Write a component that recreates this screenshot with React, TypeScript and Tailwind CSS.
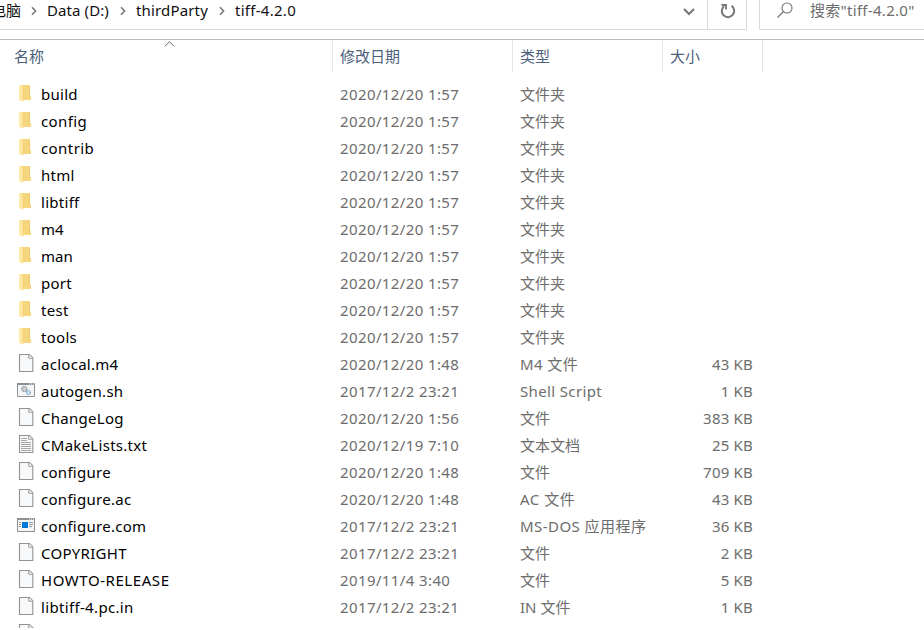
import React from "react";

type Kind = "folder" | "file" | "text" | "script" | "app";
type Row = { name: string; date: string; type: string; size?: string; kind: Kind };

const folders = ["build", "config", "contrib", "html", "libtiff", "m4", "man", "port", "test", "tools"];

const rows: Row[] = [
  ...folders.map((name): Row => ({ name, date: "2020/12/20 1:57", type: "文件夹", kind: "folder" })),
  { name: "aclocal.m4", date: "2020/12/20 1:48", type: "M4 文件", size: "43 KB", kind: "file" },
  { name: "autogen.sh", date: "2017/12/2 23:21", type: "Shell Script", size: "1 KB", kind: "script" },
  { name: "ChangeLog", date: "2020/12/20 1:56", type: "文件", size: "383 KB", kind: "file" },
  { name: "CMakeLists.txt", date: "2020/12/19 7:10", type: "文本文档", size: "25 KB", kind: "text" },
  { name: "configure", date: "2020/12/20 1:48", type: "文件", size: "709 KB", kind: "file" },
  { name: "configure.ac", date: "2020/12/20 1:48", type: "AC 文件", size: "43 KB", kind: "file" },
  { name: "configure.com", date: "2017/12/2 23:21", type: "MS-DOS 应用程序", size: "36 KB", kind: "app" },
  { name: "COPYRIGHT", date: "2017/12/2 23:21", type: "文件", size: "2 KB", kind: "file" },
  { name: "HOWTO-RELEASE", date: "2019/11/4 3:40", type: "文件", size: "5 KB", kind: "file" },
  { name: "libtiff-4.pc.in", date: "2017/12/2 23:21", type: "IN 文件", size: "1 KB", kind: "file" },
];

// Letter spacing for the names and types that differ from the common one
const nameTracking: Record<string, string> = {
  "HOWTO-RELEASE": "tracking-[0.56px]",
  contrib: "tracking-[0.42px]",
  config: "tracking-[0.36px]",
  "libtiff-4.pc.in": "tracking-[0.34px]",
  m4: "tracking-[0px]",
  man: "tracking-[0px]",
};
const typeTracking: Record<string, string> = {
  "M4 文件": "tracking-[0.4px]",
  "AC 文件": "tracking-[0.5px]",
  "Shell Script": "tracking-[0.36px]",
  "MS-DOS 应用程序": "tracking-[0.45px]",
};

function FileIcon({ kind }: { kind: Kind }) {
  if (kind === "folder")
    return (
      <svg width="20" height="20" viewBox="0 0 20 20" className="shrink-0">
        <path d="M5 2H14V13H15V17H5Z" fill="#f5d67c" />
        <path d="M13 3H14V13H13Z" fill="#edca6c" />
        <path d="M3 2H4.5L7 4V19L3 17Z" fill="#ffe9a6" />
        <path d="M6.8 4.5V18" stroke="#efcd76" strokeWidth=".6" />
      </svg>
    );
  if (kind === "script" || kind === "app")
    return (
      <svg width="20" height="20" viewBox="0 0 20 20" className="shrink-0">
        <path d="M1.5 3.5H18.5V16.5H1.5Z" fill="#f5f5f5" stroke="#8c9092" />
        <path d="M1 3H19V5H1Z" fill="#8c9092" />
        <path d="M13 4H14M15 4H16M17 4H18" stroke="#fff" />
        {kind === "script" ? (
          <>
            <circle cx="8.3" cy="9" r="2.4" fill="#e4e7e9" stroke="#8d969c" strokeWidth="1.5" strokeDasharray="1.2 .5" />
            <circle cx="8.3" cy="9" r=".9" fill="#fff" stroke="#8d969c" strokeWidth=".5" />
            <circle cx="12.4" cy="12.5" r="1.9" fill="#dcebf5" stroke="#79a9ca" strokeWidth="1.3" strokeDasharray="1 .4" />
          </>
        ) : (
          <>
            <path d="M6 7H12V13H6Z" fill="#0078d7" />
            <path d="M3 7.5H5M3 9.5H5M3 11.5H5M13 7.5H17M13 9.5H17M13 11.5H16" stroke="#999" />
          </>
        )}
      </svg>
    );
  return (
    <svg width="20" height="20" viewBox="0 0 20 20" className="shrink-0">
      <path d="M3.5 1.5H13.5L16.8 4.8V18.5H3.5Z" fill="#f8f9fa" stroke="#929292" strokeWidth="1.1" />
      <path d="M12.8 1.5V5.2H16.8" fill="#fff" stroke="#929292" />
      {kind === "text" && <path d="M5 4.5H11M5 6.5H11M5 8.5H15M5 10.5H15M5 12.5H15M5 14.5H15M5 16.5H15" stroke="#a5a5a5" />}
    </svg>
  );
}

function Crumb() {
  return (
    <svg width="8" height="10" viewBox="0 0 8 10" className="shrink-0">
      <path d="M2 1.2L5.6 5L2 8.8" fill="none" stroke="#777" strokeWidth="1.6" />
    </svg>
  );
}

export default function App() {
  return (
    <div className="h-[628px] w-[924px] overflow-hidden bg-white font-['Noto_Sans','Noto_Sans_CJK_SC',sans-serif] text-[15px] leading-[27px] whitespace-nowrap text-[#6d6d6d]">
      <div className="flex h-[30px] overflow-hidden">
        <div className="flex w-[708px] justify-between border-r border-b border-[#d9d9d9] text-[#111]">
          <div className="-mt-[3px] -ml-[9px] flex h-[27px] items-center">
            <span className="w-[39px]">电脑</span>
            <Crumb />
            <span className="ml-[9px] w-[72px] tracking-[0.1px]">Data (D:)</span>
            <Crumb />
            <span className="ml-[9px] w-[82px] tracking-[0.15px]">thirdParty</span>
            <Crumb />
            <span className="ml-[9px] tracking-[0.28px]">tiff-4.2.0</span>
          </div>
          <svg width="12" height="8" viewBox="0 0 12 8" className="mt-2 mr-[12px]">
            <path d="M1 1L6 6L11 1" fill="none" stroke="#777" strokeWidth="2" />
          </svg>
        </div>
        <div className="w-[39px] border-r border-b border-[#d9d9d9]">
          <svg width="16" height="16" viewBox="0 0 16 16" className="mt-[3px] ml-[12px]">
            <path d="M4 3.2A6.2 6.2 0 1 0 11.6 2.9" fill="none" stroke="#777" strokeWidth="2" />
            <path d="M1.5 2H6V6.5" fill="none" stroke="#777" strokeWidth="1.8" />
          </svg>
        </div>
        <div className="ml-[12px] flex flex-1 border-b border-l border-[#d9d9d9]">
          <svg width="17" height="17" viewBox="0 0 17 17" className="mt-[2px] ml-[17px] shrink-0">
            <circle cx="10" cy="6" r="5" fill="none" stroke="#777" strokeWidth="1.1" />
            <path d="M6.5 9.5L.5 15.5" stroke="#777" strokeWidth="1.2" />
          </svg>
          <span className="-mt-[3px] ml-[16px] tracking-[0.3px]">搜索"tiff-4.2.0"</span>
        </div>
      </div>
      <div className="mt-[9px] flex h-[33px] border-t border-[#b9bbbc] leading-[33px] text-[#4c607a]">
        <div className="relative w-[333px] border-r border-[#e5e5e5] pl-[14px]">
          名称
          <svg width="11" height="6" viewBox="0 0 11 6" className="absolute top-[1px] left-[164px]">
            <path d="M.8 5.3L5.5 .8L10.2 5.3" fill="none" stroke="#666" />
          </svg>
        </div>
        <div className="w-[180px] border-r border-[#e5e5e5] pl-[7px]">修改日期</div>
        <div className="w-[150px] border-r border-[#e5e5e5] pl-[7px]">类型</div>
        <div className="w-[100px] border-r border-[#e5e5e5] pl-[7px]">大小</div>
      </div>
      <div className="mt-[9px]">
        {rows.map((r) => (
          <div key={r.name} className="flex h-[27px]">
            <div className="flex w-[340px] pl-[16px]">
              <span className="mt-[2px]"><FileIcon kind={r.kind} /></span>
              <span className={`ml-[5px] text-black ${nameTracking[r.name] ?? "tracking-[0.28px]"}`}>{r.name}</span>
            </div>
            <div className="w-[180px] tracking-[0.39px]">{r.date}</div>
            <div className={`w-[143px] ${typeTracking[r.type] ?? ""}`}>{r.type}</div>
            <div className="w-[90px] text-right tracking-[0.2px]">{r.size}</div>
          </div>
        ))}
        <div className="pt-[2px] pl-[16px]"><FileIcon kind="file" /></div>
      </div>
    </div>
  );
}
